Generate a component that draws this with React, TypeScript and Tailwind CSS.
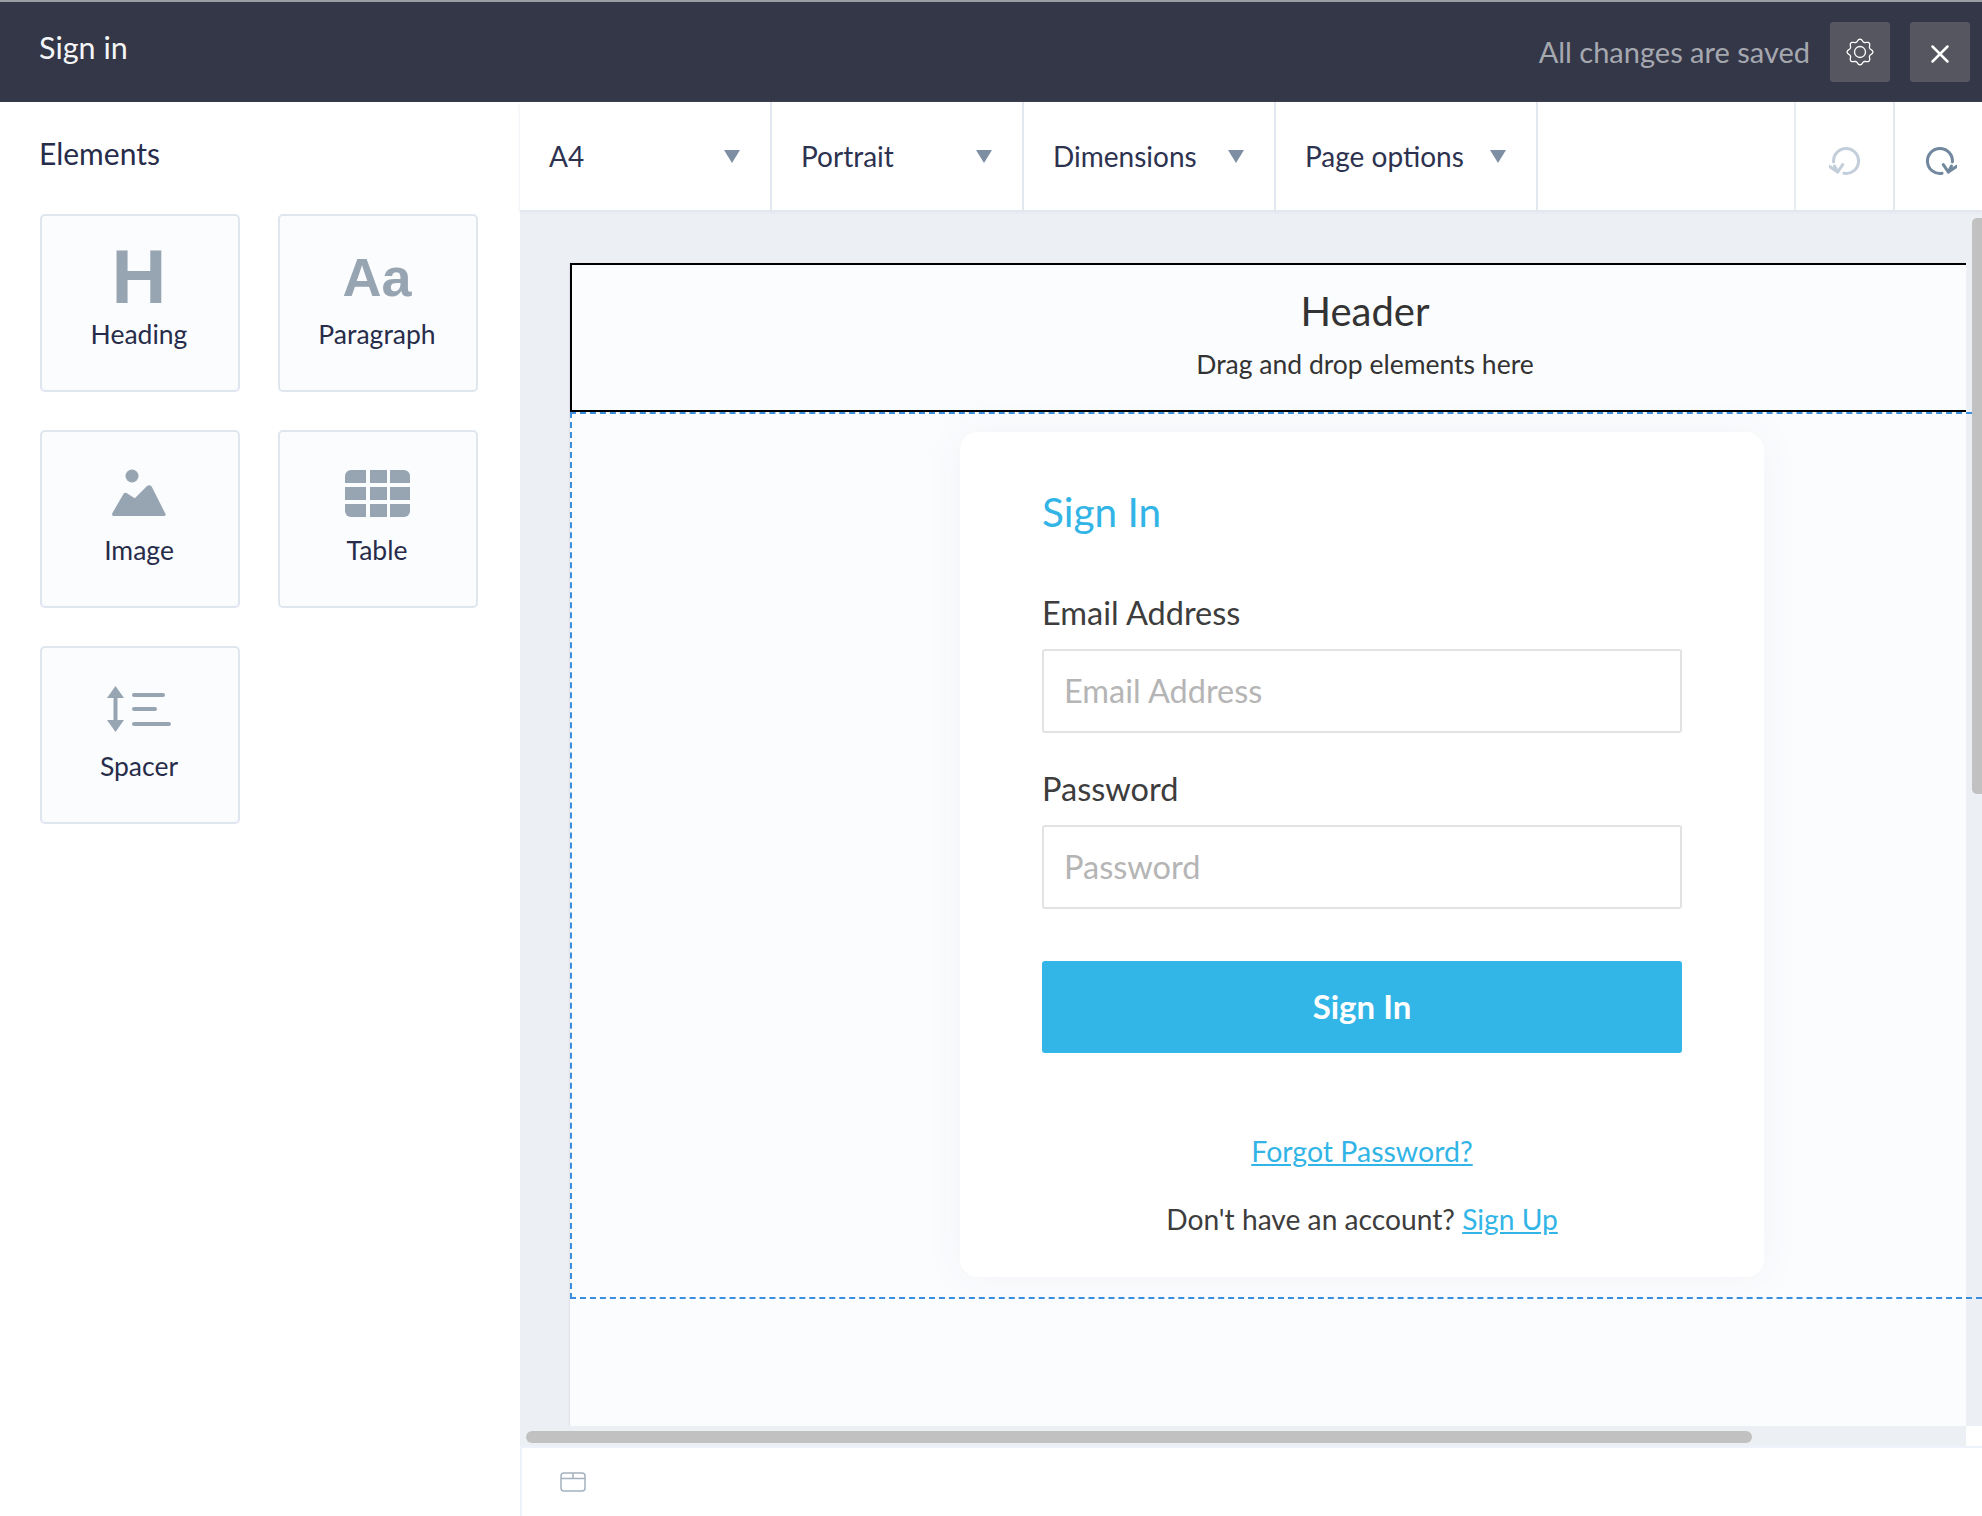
import { X } from "lucide-react";

const toolbarItems = [
  { label: "A4", width: "w-[252px]" },
  { label: "Portrait", width: "w-[252px]" },
  { label: "Dimensions", width: "w-[252px]" },
  { label: "Page options", width: "w-[262px]" },
];

// eight soft teeth, same shape as the settings glyph in the top bar
const gearPath =
  Array.from({ length: 96 }, (_, i) => {
    const a = (i / 96) * Math.PI * 2;
    const r = 11.6 + 1.3 * Math.cos(8 * a);
    return `${i === 0 ? "M" : "L"}${(14 + r * Math.cos(a)).toFixed(2)} ${(14 + r * Math.sin(a)).toFixed(2)}`;
  }).join(" ") + "Z";

function Caret() {
  return <div className="w-0 h-0 border-l-[8px] border-r-[8px] border-t-[13px] border-l-transparent border-r-transparent border-t-[#7f8fa3]" />;
}

function ElementCard({ label, children }: { label: string; children: React.ReactNode }) {
  return (
    <div className="w-[200px] h-[178px] pr-[2px] bg-[#fbfcfe] border-2 border-[#dfe6ee] rounded-[5px] flex flex-col items-center">
      <div className="h-[100px] w-full pt-[22px] flex items-center justify-center text-[#97a4b1]">{children}</div>
      <div className="text-[26.500px] leading-[36px] text-[#272c4a]">{label}</div>
    </div>
  );
}

function Field({ label, mb }: { label: string; mb: string }) {
  return (
    <div className={mb}>
      <div className="text-[32.500px] leading-[40px] text-[#3d3d3d] mb-[16px]">{label}</div>
      <div className="h-[84px] bg-white border-2 border-[#e2e2e2] rounded-[3px] pl-[20px] flex items-center text-[32.500px] text-[#b5b5b5]">{label}</div>
    </div>
  );
}

export default function App() {
  return (
    <div className="h-[1516px] w-[1982px] overflow-hidden flex flex-col bg-white font-['Lato',sans-serif]">
      {/* top bar */}
      <div className="h-[102px] shrink-0 bg-[#343748] border-t-2 border-[#9b9da5] flex items-center pl-[39px] pr-[12px]">
        <div className="text-[30.500px] text-[#f4f5f7] -mt-[8px] flex-1">Sign in</div>
        <div className="text-[29px] text-[#a6a8b0] mr-[20px]">All changes are saved</div>
        <div className="w-[60px] h-[60px] bg-[#55565f] rounded-[3px] flex items-center justify-center mr-[20px]">
          <svg width="28" height="28" viewBox="0 0 28 28" fill="none" stroke="#ffffff" strokeWidth="1.300">
            <path d={gearPath} />
            <circle cx="14" cy="14" r="5.500" />
          </svg>
        </div>
        <div className="w-[60px] h-[60px] bg-[#55565f] rounded-[3px] flex items-center justify-center text-white pt-[4px]">
          <X size={30} strokeWidth={2} />
        </div>
      </div>

      <div className="flex-1 flex min-h-0">
        {/* elements sidebar */}
        <div className="w-[520px] shrink-0 pl-[40px] pt-[31px]">
          <div className="text-[30px] leading-[40px] text-[#272c4a] mb-[41px] -ml-px">Elements</div>
          <div className="grid grid-cols-[200px_200px] gap-x-[38px] gap-y-[38px]">
            <ElementCard label="Heading">
              <span className="font-['Liberation_Sans'] font-bold text-[76px] leading-none">H</span>
            </ElementCard>
            <ElementCard label="Paragraph">
              <span className="font-['Liberation_Sans'] font-bold text-[54px] leading-none">Aa</span>
            </ElementCard>
            <ElementCard label="Image">
              <svg width="54" height="48" viewBox="0 0 54 48" fill="#97a4b1">
                <circle cx="20" cy="7" r="6.500" />
                <path d="M2 47c-1.600 0-2.400-1.400-1.700-2.800l11-19c1-1.600 2.600-1.800 4-.8l7.500 4.800 12-12c1.800-1.600 3.800-1.400 5 .6l13.600 27c.8 1.600-.1 2.200-1.400 2.200z" />
              </svg>
            </ElementCard>
            <ElementCard label="Table">
              <svg width="65" height="47" viewBox="0 0 65 47" fill="#97a4b1">
                <path d="M0 6a6 6 0 0 1 6-6h15v13H0z" />
                <rect x="25" width="17" height="13" />
                <path d="M45 0h14a6 6 0 0 1 6 6v7H45z" />
                <rect y="17" width="21" height="13" />
                <rect x="25" y="17" width="17" height="13" />
                <rect x="45" y="17" width="20" height="13" />
                <path d="M0 34h21v13H6a6 6 0 0 1-6-6z" />
                <rect x="25" y="34" width="17" height="13" />
                <path d="M45 34h20v7a6 6 0 0 1-6 6H45z" />
              </svg>
            </ElementCard>
            <ElementCard label="Spacer">
              <svg width="64" height="46" viewBox="0 0 64 46" fill="#97a4b1">
                <path d="M8.500 0 17 12H0z" />
                <rect x="6.500" y="10" width="4" height="26" />
                <path d="M8.500 46 0 34h17z" />
                <rect x="25" y="7" width="33" height="4" rx="2" />
                <rect x="25" y="21" width="25" height="4" rx="2" />
                <rect x="25" y="36" width="39" height="4" rx="2" />
              </svg>
            </ElementCard>
          </div>
        </div>

        <div className="flex-1 flex flex-col min-w-0">
          {/* page toolbar */}
          <div className="h-[108px] shrink-0 flex bg-white shadow-[0_2px_3px_#e0e5ec] relative z-10">
            {toolbarItems.map((item) => (
              <div key={item.label} className={`${item.width} border-r-2 border-[#e2e8f0] pl-[29px] pr-[30px] flex items-center justify-between text-[28px] text-[#2d3250]`}>
                <span>{item.label}</span>
                <Caret />
              </div>
            ))}
            <div className="flex-1" />
            <div className="w-[99px] border-l-2 border-[#e8edf3] flex items-center justify-center pt-[11px]">
              <svg width="32" height="30" viewBox="0 0 32 30" fill="none" stroke="#c3cedb" strokeWidth="3" strokeLinecap="round" strokeLinejoin="round">
                <path d="M4.600 15A12.500 12.500 0 1 1 15 26.300" />
                <path d="M5.500 19 8.700 25" />
                <path d="M13.700 17.700 8.700 25 0.300 19.300" />
              </svg>
            </div>
            <div className="w-[89px] border-l-2 border-[#e2e8f0] flex items-center justify-center pt-[11px] pl-[5px]">
              <svg width="32" height="30" viewBox="0 0 32 30" fill="none" stroke="#71879e" strokeWidth="3" strokeLinecap="round" strokeLinejoin="round">
                <path d="M27.400 15A12.500 12.500 0 1 0 17 26.300" />
                <path d="M26.500 19 23.300 25" />
                <path d="M18.300 17.700 23.300 25 31.700 19.300" />
              </svg>
            </div>
          </div>

          {/* canvas */}
          <div className="flex-1 min-h-0 bg-[#eceff4] relative overflow-hidden pl-[50px] pt-[53px]">
            <div className="w-[1396px] h-full bg-[#fbfcfe] shadow-[-1px_0_1px_#dfe2e8]">
              <div className="h-[149px] border-y-2 border-l-2 border-black overflow-hidden">
                <div className="w-[1586px] pt-[23px] flex flex-col items-center">
                  <div className="text-[40px] leading-[46px] text-[#333333]">Header</div>
                  <div className="text-[26.500px] leading-[36px] mt-[12px] text-[#333333]">Drag and drop elements here</div>
                </div>
              </div>
              <div className="w-[1412px] h-[887px] border-y-2 border-l-2 border-dashed border-[#3b8ede] pt-[18px] pl-[388px]">
                <div className="w-[804px] h-[845px] bg-white rounded-[18px] shadow-[0_0_40px_rgba(60,70,90,0.05)] pl-[82px] pr-[82px] pt-[55px]">
                  <div className="text-[40.500px] leading-[50px] text-[#32b5e6] mb-[56px]">Sign In</div>
                  <Field label="Email Address" mb="mb-[36px]" />
                  <Field label="Password" mb="mb-[52px]" />
                  <div className="h-[92px] bg-[#32b6e7] rounded-[3px] flex items-center justify-center text-white font-bold text-[33px]">Sign In</div>
                  <div className="mt-[78px] text-center text-[28.500px] leading-[40px] text-[#32b5e6] underline">Forgot Password?</div>
                  <div className="mt-[28px] text-center text-[28.200px] leading-[40px] text-[#3d3d3d]">
                    Don't have an account? <span className="text-[#32b5e6] underline">Sign Up</span>
                  </div>
                </div>
              </div>
            </div>
            {/* vertical scrollbar */}
            <div className="absolute right-0 top-[8px] w-[10px] h-[576px] rounded-l-[5px] bg-[#c1c1c1]" />
          </div>

          {/* horizontal scrollbar */}
          <div className="h-[20px] shrink-0 flex bg-[#eceff4]">
            <div className="w-[1446px] pl-[6px] pt-[5px]">
              <div className="w-[1226px] h-[12px] rounded-[6px] bg-[#c1c1c1]" />
            </div>
            <div className="flex-1 bg-white" />
          </div>

          {/* bottom bar */}
          <div className="h-[70px] shrink-0 bg-white border-t-2 border-l-2 border-[#eef3fb] pl-[38px] flex items-center">
            <svg width="26" height="20" viewBox="0 0 26 20" fill="none" stroke="#a4b1bf" strokeWidth="1.500">
              <rect x="1" y="1" width="24" height="18" rx="3" />
              <path d="M1 6.500h24M13 1v5.500" />
            </svg>
          </div>
        </div>
      </div>
    </div>
  );
}
